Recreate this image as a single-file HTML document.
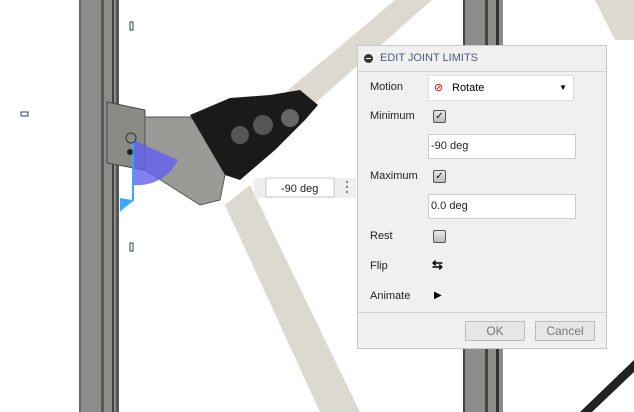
<!DOCTYPE html>
<html><head><style>
body{margin:0;width:634px;height:412px;overflow:hidden;background:#fff;font-family:"Liberation Sans",Arial,sans-serif;position:relative}
svg.bg{position:absolute;left:0;top:0}
.panel{position:absolute;left:357px;top:45px;width:248px;height:302px;background:#f0f0f0;border:1px solid #c8c8c8}
.hdr{height:25px;border-bottom:1px solid #d4d4d4;font-size:11px;color:#4a5a80;line-height:25px;padding-left:22px;position:relative}
.hdr:before{content:"";position:absolute;left:6px;top:8px;width:9px;height:9px;border-radius:50%;background:#333}
.hdr:after{content:"";position:absolute;left:8px;top:12px;width:5px;height:1px;background:#fff}
.lbl{position:absolute;left:12px;font-size:11px;color:#222}
.cb{position:absolute;left:75px;width:11px;height:11px;border:1px solid #555;border-radius:2px;background:linear-gradient(#e8e8e8,#bcbcbc);font-size:10px;line-height:11px;text-align:center;color:#111}
.inp{position:absolute;left:70px;width:144px;height:23px;background:#fff;border:1px solid #ccc;font-size:11px;line-height:23px;padding-left:2px;color:#222}
.btn{position:absolute;top:275px;width:58px;height:18px;border:1px solid #bbb;background:#e6e6e6;font-size:12px;color:#777;text-align:center;line-height:18px}
</style></head><body>
<svg class="bg" width="634" height="412">
<rect x="79" y="0" width="40" height="412" fill="#8c8c88"/>
<rect x="79" y="0" width="2" height="412" fill="#666"/>
<rect x="101" y="0" width="3" height="412" fill="#5a5a58"/>
<rect x="112" y="0" width="2" height="412" fill="#444"/>
<rect x="116" y="0" width="3" height="412" fill="#555"/>
<rect x="463" y="0" width="40" height="412" fill="#8c8c88"/>
<rect x="463" y="0" width="2" height="412" fill="#444"/>
<rect x="485" y="0" width="3" height="412" fill="#444"/>
<rect x="496" y="0" width="3" height="412" fill="#333"/>
<polygon points="262,112 395,0 432,0 313,105" fill="#dcd9d0"/>
<polygon points="595,0 634,0 634,40 615,40" fill="#dcd9d0"/>
<polygon points="225,205 250,185 360,412 320,412" fill="#dcd9d0"/>
<polygon points="580,412 634,360 634,372 592,412" fill="#222"/>
<polygon points="107,102 145,110 145,170 107,163" fill="#8a8a86" stroke="#444"/>
<polygon points="145,117 190,117 230,150 220,200 200,205 145,170" fill="#9a9a96" stroke="#555"/>
<polygon points="190,115 230,98 270,95 300,90 318,105 305,120 275,150 240,180 225,175" fill="#1a1a1a"/>
<circle cx="240" cy="135" r="9" fill="#555"/><circle cx="263" cy="125" r="10" fill="#555"/><circle cx="290" cy="118" r="9" fill="#666"/>
<path d="M133,140 L133,185 A45,45 0 0 0 178,160 Z" fill="#6060f0" opacity=".8"/>
<path d="M133,140 L133,200 L120,210" stroke="#3aa8ff" stroke-width="2" fill="none"/>
<polygon points="120,198 132,200 120,212" fill="#3aa8ff"/>
<circle cx="131" cy="138" r="5" fill="none" stroke="#333"/>
<circle cx="130" cy="152" r="3" fill="#222"/>
<rect x="130" y="22" width="3" height="8" fill="none" stroke="#246"/>
<rect x="21" y="112" width="7" height="4" fill="none" stroke="#246"/>
<rect x="130" y="243" width="3" height="8" fill="none" stroke="#246"/>
<rect x="254" y="178" width="102" height="20" fill="#eee"/>
<rect x="266" y="178" width="68" height="19" fill="#fff" stroke="#ccc"/>
<text x="281" y="192" font-size="11" fill="#222" font-family="Liberation Sans">-90 deg</text>
<circle cx="347" cy="182" r="1.2" fill="#888"/><circle cx="347" cy="187" r="1.2" fill="#888"/><circle cx="347" cy="192" r="1.2" fill="#888"/>
</svg>
<div class="panel">
<div class="hdr">EDIT JOINT LIMITS</div>
<div class="lbl" style="top:35px">Motion</div>
<div style="position:absolute;left:70px;top:29px;width:144px;height:24px;background:#fff;border:1px solid #ddd;font-size:11px;line-height:24px">
<span style="position:absolute;left:5px;top:0;color:#c00">⊘</span><span style="position:absolute;left:23px">Rotate</span><span style="position:absolute;right:6px;font-size:8px">▼</span></div>
<div class="lbl" style="top:64px">Minimum</div>
<div class="cb" style="top:64px">✓</div>
<div class="inp" style="top:88px">-90 deg</div>
<div class="lbl" style="top:124px">Maximum</div>
<div class="cb" style="top:124px">✓</div>
<div class="inp" style="top:148px">0.0 deg</div>
<div class="lbl" style="top:184px">Rest</div>
<div class="cb" style="top:184px"></div>
<div class="lbl" style="top:214px">Flip</div>
<div style="position:absolute;left:74px;top:211px;font-size:13px;font-weight:bold">⇆</div>
<div class="lbl" style="top:244px">Animate</div>
<div style="position:absolute;left:76px;top:244px;font-size:10px">▶</div>
<div style="position:absolute;left:0;right:0;top:266px;border-top:1px solid #d4d4d4"></div>
<div class="btn" style="left:107px">OK</div>
<div class="btn" style="left:177px">Cancel</div>
</div>
</body></html>
